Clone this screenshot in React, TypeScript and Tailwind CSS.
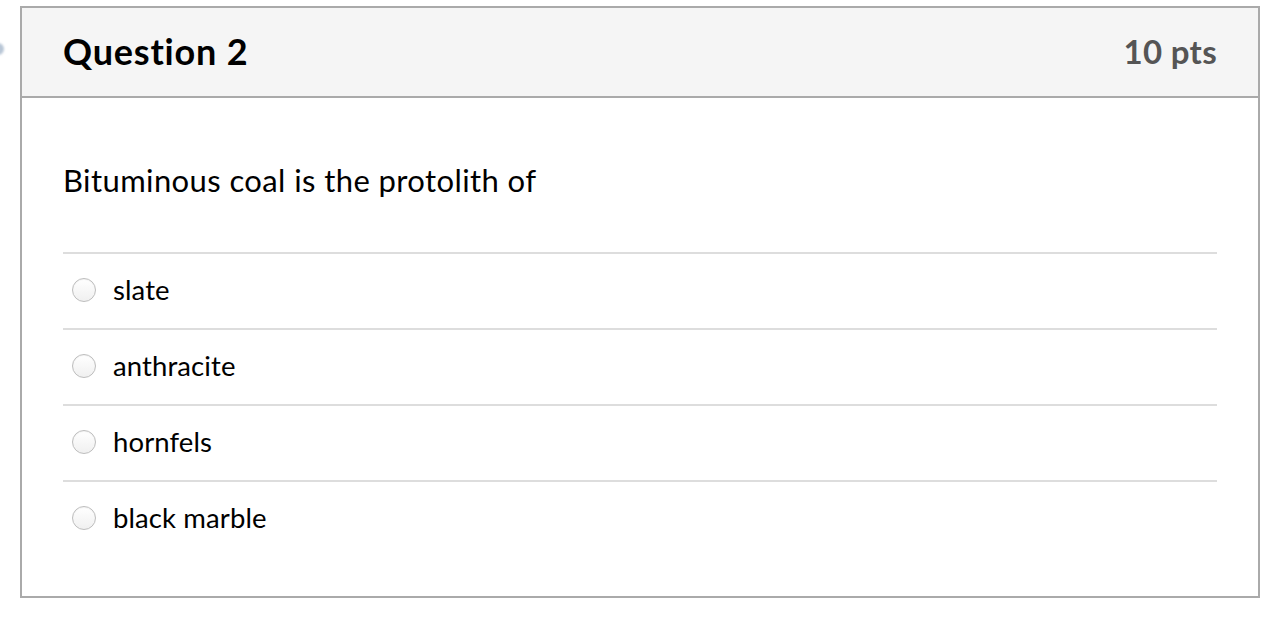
const ANSWERS = ["slate", "anthracite", "hornfels", "black marble"];

function Radio() {
  return (
    <span className="w-6 h-6 shrink-0 rounded-full border border-[#bdbdbd] bg-gradient-to-b from-white to-[#f0f0f0] shadow-[inset_0_1px_1px_rgba(0,0,0,0.05)]" />
  );
}

export default function App() {
  return (
    <div className="relative min-h-[618px] bg-white pt-[6px] font-['Lato','Liberation_Sans',sans-serif] text-black">
      {/* partly hidden marker at the page edge */}
      <span className="absolute left-[-8px] top-[43px] w-3 h-3 rounded-full bg-[#b8c6d6] blur-[1px]" />

      <div className="ml-5 mr-[6px] border-2 border-[#aaaaaa]">
        {/* Header */}
        <div className="flex items-center justify-between h-[90px] px-[41px] bg-[#f5f5f5] border-b-2 border-[#aaaaaa]">
          <h2 className="text-[36px] font-bold leading-none tracking-[0.8px] pb-[2px]">Question 2</h2>
          <span className="text-[33px] font-bold text-[#555555] leading-none tracking-[0.3px] pb-[2px]">10 pts</span>
        </div>

        {/* Body */}
        <div className="px-[41px] pt-[64px] pb-[40px]">
          <p className="text-[31px] leading-[36px] tracking-[0.4px] mb-[54px]">Bituminous coal is the protolith of</p>
          <div>
            {ANSWERS.map((a) => (
              <label
                key={a}
                className="flex items-center gap-[17px] h-[76px] pl-[9px] pb-[3px] border-t-2 border-[#dddddd]"
              >
                <Radio />
                <span className="text-[27.5px] leading-none tracking-[0.1px]">{a}</span>
              </label>
            ))}
          </div>
        </div>
      </div>
    </div>
  );
}
